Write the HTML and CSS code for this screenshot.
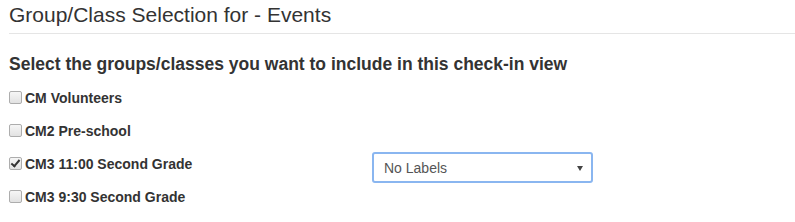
FILE: index.html
```html
<!DOCTYPE html>
<html lang="en">
<head>
    <meta charset="UTF-8" />
    <title>Group/Class Selection</title>
    <link rel="stylesheet" href="styles.css">
</head>
<body>
<div class="page">
    <h1 class="page-title">Group/Class Selection for - Events</h1>

    <h3 class="section-title">Select the groups/classes you want to include in this check-in view</h3>

    <div class="group-list">
        <div class="group-row">
            <label class="group-label"><input type="checkbox"> CM Volunteers</label>
        </div>
        <div class="group-row">
            <label class="group-label"><input type="checkbox"> CM2 Pre-school</label>
        </div>
        <div class="group-row">
            <label class="group-label"><input type="checkbox" checked> CM3 11:00 Second Grade</label>
            <div class="select-wrap">
                <select class="label-select">
                    <option>No Labels</option>
                </select>
            </div>
        </div>
        <div class="group-row">
            <label class="group-label"><input type="checkbox"> CM3 9:30 Second Grade</label>
        </div>
    </div>
</div>
</body>
</html>
```

FILE: styles.css
```css
body {
    margin: 0;
    font-family: "Liberation Sans", Arial, sans-serif;
    color: #333333;
    background: #ffffff;
}

.page {
    padding: 0 0 0 9px;
}

.page-title {
    font-size: 21px;
    font-weight: normal;
    margin: 0;
    padding: 4px 0 7px;
    border-bottom: 1px solid #e5e5e5;
    line-height: 22px;
}

.section-title {
    font-size: 17.5px;
    font-weight: bold;
    margin: 19px 0 0;
    line-height: 22px;
}

.group-list {
    margin-top: 6px;
}

.group-row {
    display: flex;
    align-items: center;
    height: 33px;
}

.group-label {
    width: 363px;
    font-size: 14px;
    font-weight: bold;
    display: flex;
    align-items: center;
    gap: 3px;
}

.group-label input {
    appearance: none;
    -webkit-appearance: none;
    position: relative;
    margin: 0;
    width: 13px;
    height: 13px;
    border: 1px solid #adadad;
    border-radius: 2px;
    background: linear-gradient(#f6f6f6, #e2e2e2);
}

.group-label input:checked::after {
    content: "";
    position: absolute;
    left: 3px;
    top: 0px;
    width: 3px;
    height: 7px;
    border: solid #333333;
    border-width: 0 2px 2px 0;
    transform: rotate(40deg);
}

.select-wrap {
    position: relative;
    margin-top: 8px;
}

.select-wrap::after {
    content: "";
    position: absolute;
    right: 10px;
    top: 14px;
    border-left: 3px solid transparent;
    border-right: 3px solid transparent;
    border-top: 5px solid #444444;
    pointer-events: none;
}

.label-select {
    appearance: none;
    -webkit-appearance: none;
    width: 221px;
    height: 31px;
    padding: 4px 10px;
    font-family: "Liberation Sans", Arial, sans-serif;
    font-size: 14px;
    color: #555555;
    background: #ffffff;
    border: 2px solid #8ab6f0;
    border-radius: 3px;
    outline: none;
}
```
